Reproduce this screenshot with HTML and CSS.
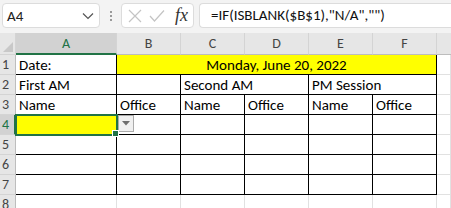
FILE: index.html
```html
<!DOCTYPE html>
<html>
<head>
<meta charset="utf-8">
<link rel="stylesheet" href="styles.css">
</head>
<body>
<div class="toolbar">
  <div class="namebox">
    <span class="nb-text">A4</span>
    <svg class="chev" width="12" height="8" viewBox="0 0 12 8"><path d="M1 1.5 L6 6.5 L11 1.5" fill="none" stroke="#555" stroke-width="1.2"/></svg>
  </div>
  <div class="dots"><i></i><i></i><i></i></div>
  <div class="fbtns">
    <svg width="14" height="14" viewBox="0 0 14 14"><path d="M1 1 L13 13 M13 1 L1 13" stroke="#c4c4c4" stroke-width="1.2"/></svg>
    <svg width="16" height="14" viewBox="0 0 16 14"><path d="M1 7 L5.5 12 L15 1.5" fill="none" stroke="#c4c4c4" stroke-width="1.2"/></svg>
    <span class="fx">fx</span>
  </div>
  <div class="fbar">=IF(ISBLANK($B$1),"N/A","")</div>
</div>
<div class="sheet">
  <div class="corner"><span class="tri"></span></div>
  <div class="ch sel">A</div>
  <div class="ch">B</div>
  <div class="ch">C</div>
  <div class="ch">D</div>
  <div class="ch">E</div>
  <div class="ch">F</div>
  <div class="ch last"></div>

  <div class="rh">1</div>
  <div class="c t">Date:</div>
  <div class="c t yellow center span5">Monday, June 20, 2022</div>
  <div class="c g"></div>

  <div class="rh">2</div>
  <div class="c t">First AM</div>
  <div class="c t"></div>
  <div class="c t span2">Second AM</div>
  <div class="c t span2">PM Session</div>
  <div class="c g"></div>

  <div class="rh">3</div>
  <div class="c t">Name</div>
  <div class="c t">Office</div>
  <div class="c t">Name</div>
  <div class="c t">Office</div>
  <div class="c t">Name</div>
  <div class="c t">Office</div>
  <div class="c g"></div>

  <div class="rh sel">4</div>
  <div class="c t yellow active"><span class="handle"></span></div>
  <div class="c t"><span class="dd"><svg width="8" height="5" viewBox="0 0 8 5"><path d="M0 0 H8 L4 4.5 Z" fill="#6e6e6e"/></svg></span></div>
  <div class="c t"></div><div class="c t"></div><div class="c t"></div><div class="c t"></div>
  <div class="c g"></div>

  <div class="rh">5</div>
  <div class="c t"></div><div class="c t"></div><div class="c t"></div><div class="c t"></div><div class="c t"></div><div class="c t"></div>
  <div class="c g"></div>

  <div class="rh">6</div>
  <div class="c t"></div><div class="c t"></div><div class="c t"></div><div class="c t"></div><div class="c t"></div><div class="c t"></div>
  <div class="c g"></div>

  <div class="rh">7</div>
  <div class="c t"></div><div class="c t"></div><div class="c t"></div><div class="c t"></div><div class="c t"></div><div class="c t"></div>
  <div class="c g"></div>

  <div class="rh">8</div>
  <div class="c g"></div><div class="c g"></div><div class="c g"></div><div class="c g"></div><div class="c g"></div><div class="c g"></div>
  <div class="c g"></div>
</div>
</body>
</html>
```
FILE: styles.css
```css
* { box-sizing: border-box; }
html, body { margin: 0; padding: 0; }
body {
  width: 451px;
  height: 208px;
  overflow: hidden;
  background: #ffffff;
  font-family: "Carlito", "Lato", "Liberation Sans", sans-serif;
  font-size: 15px;
  color: #000;
}
.toolbar {
  height: 33px;
  background: #f3f3f3;
  display: flex;
  align-items: flex-start;
  padding: 3px 0 0 2px;
}
.namebox {
  width: 98px;
  height: 25px;
  background: #fff;
  border: 1px solid #dcdcdc;
  border-radius: 4px;
  display: flex;
  align-items: center;
  justify-content: space-between;
  padding: 0 5px 0 4px;
}
.nb-text { font-size: 15px; color: #222; }
.dots {
  width: 21px;
  height: 25px;
  display: flex;
  flex-direction: column;
  align-items: center;
  justify-content: center;
  gap: 2px;
}
.dots i { width: 2px; height: 2px; background: #9a9a9a; display: block; }
.fbtns {
  width: 73px;
  height: 25px;
  background: #fff;
  border: 1px solid #dcdcdc;
  border-radius: 4px;
  display: flex;
  align-items: center;
  padding: 0 4px 0 6px;
  gap: 7px;
}
.fx {
  font-family: "Liberation Serif", serif;
  font-style: italic;
  font-size: 18px;
  color: #333;
  margin-left: 3px;
}
.fbar {
  margin-left: 5px;
  flex: 1;
  height: 25px;
  background: #fff;
  border: 1px solid #dcdcdc;
  border-right: none;
  border-radius: 4px 0 0 4px;
  padding: 2px 0 0 11px;
  font-size: 15px;
  color: #111;
}
.sheet {
  display: grid;
  grid-template-columns: 16px 101px 64px 64px 64px 64px 64px 1fr;
  grid-template-rows: 22px repeat(8, 20px);
  background: #fff;
}
.corner {
  background: #e6e6e6;
  border-right: 1px solid #d4d4d4;
  border-bottom: 1px solid #d4d4d4;
  position: relative;
}
.tri {
  position: absolute;
  right: 2px;
  bottom: 2px;
  width: 0; height: 0;
  border-left: 10px solid transparent;
  border-bottom: 10px solid #c8c8c8;
}
.ch {
  background: #e6e6e6;
  border-right: 1px solid #d4d4d4;
  border-bottom: 1px solid #bdbdbd;
  text-align: center;
  font-size: 14px;
  line-height: 21px;
  color: #444;
}
.ch.sel {
  background: #d2d2d2;
  border-bottom: 2px solid #217346;
  color: #217346;
}
.ch.last { border-right: none; }
.rh {
  background: #e6e6e6;
  border-right: 1px solid #bdbdbd;
  border-bottom: 1px solid #d4d4d4;
  font-size: 14px;
  line-height: 20px;
  padding-left: 2px;
  color: #444;
}
.rh.sel {
  background: #d2d2d2;
  border-right: 2px solid #217346;
  color: #217346;
}
.c {
  border-right: 1px solid #e1e1e1;
  border-bottom: 1px solid #e1e1e1;
  padding: 1px 3px 0;
  line-height: 19px;
  white-space: nowrap;
  position: relative;
}
.c.t { border-right-color: #000; border-bottom-color: #000; }
.yellow { background: #ffff00; }
.center { text-align: center; }
.span5 { grid-column: span 5; }
.span2 { grid-column: span 2; }
.active { outline: 2px solid #217346; outline-offset: -1px; }
.handle {
  position: absolute;
  right: -3px;
  bottom: -3px;
  width: 5px;
  height: 5px;
  background: #217346;
  border: 1px solid #fff;
  box-sizing: content-box;
  z-index: 2;
}
.dd {
  position: absolute;
  left: 1px;
  top: 0;
  width: 16px;
  height: 17px;
  background: #f0f0f0;
  border: 1px solid #ababab;
  display: flex;
  align-items: center;
  justify-content: center;
}
```
